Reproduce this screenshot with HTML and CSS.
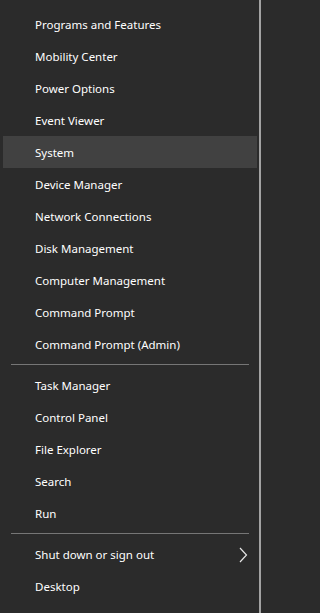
FILE: index.html
```html
<!DOCTYPE html>
<html>
<head>
<meta charset="utf-8">
<link rel="stylesheet" href="styles.css">
</head>
<body>
<div class="menu">
  <div class="group">
    <div class="item">Programs and Features</div>
    <div class="item">Mobility Center</div>
    <div class="item">Power Options</div>
    <div class="item">Event Viewer</div>
    <div class="item active">System</div>
    <div class="item">Device Manager</div>
    <div class="item">Network Connections</div>
    <div class="item">Disk Management</div>
    <div class="item">Computer Management</div>
    <div class="item">Command Prompt</div>
    <div class="item">Command Prompt (Admin)</div>
  </div>
  <div class="sep"></div>
  <div class="group">
    <div class="item">Task Manager</div>
    <div class="item">Control Panel</div>
    <div class="item">File Explorer</div>
    <div class="item">Search</div>
    <div class="item">Run</div>
  </div>
  <div class="sep"></div>
  <div class="group">
    <div class="item sub"><span>Shut down or sign out</span>
      <svg class="chev" width="9" height="16" viewBox="0 0 9 16"><path d="M1 1 L7.5 8 L1 15" fill="none" stroke="#e6e6e6" stroke-width="1.2"/></svg>
    </div>
    <div class="item">Desktop</div>
  </div>
</div>
</body>
</html>
```
FILE: styles.css
```css
html, body {
  margin: 0;
  padding: 0;
  background: #2b2b2b;
}
.menu {
  background: #2b2b2b;
  border-right: 2px solid #a3a3a3;
  border-bottom: 3px solid #a3a3a3;
  padding: 8px 2px 8px 3px;
  box-sizing: content-box;
  width: 254px;
  height: 602px;
  font-family: "Noto Sans", "Open Sans", sans-serif;
  font-size: 11.5px;
  color: #ffffff;
}
.group {
  display: flex;
  flex-direction: column;
}
.item {
  height: 32px;
  box-sizing: border-box;
  padding-top: 1px;
  padding-left: 32px;
  padding-right: 9px;
  display: flex;
  align-items: center;
  justify-content: space-between;
  white-space: nowrap;
}
.item.active {
  background: #414141;
}
.sep {
  height: 1px;
  background: #767676;
  margin: 4px 8px;
}
.chev {
  display: block;
}
```
